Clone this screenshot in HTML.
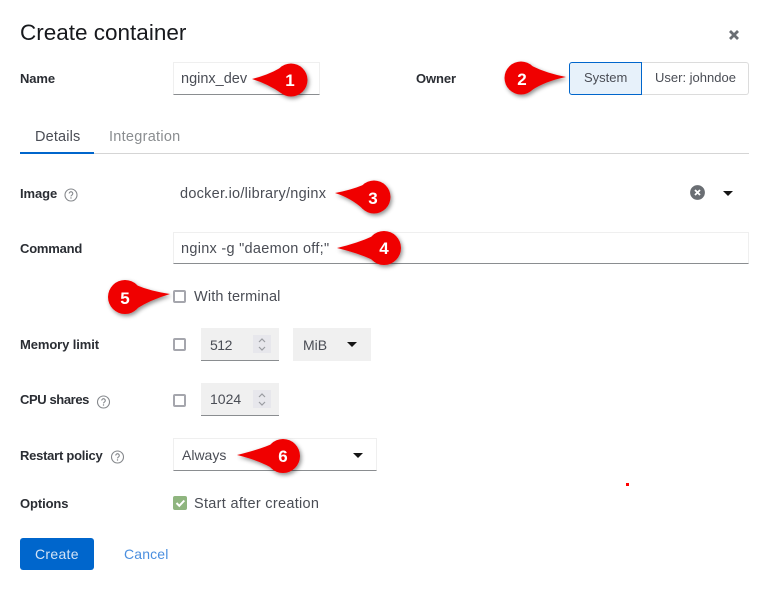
<!DOCTYPE html>
<html lang="en">
<head>
<meta charset="utf-8">
<title>Create container</title>
<style>
html,body{margin:0;padding:0;background:#fff}
body{width:768px;height:591px;position:relative;overflow:hidden;font-family:"Liberation Sans",sans-serif;color:#4a4d55}
#w{position:absolute;left:0;top:0;width:768px;height:591px;filter:blur(.35px)}
.t{position:absolute;white-space:nowrap;font-size:14px;line-height:18px;height:18px}
.l{position:absolute;white-space:nowrap;font-size:13px;line-height:18px;height:18px;font-weight:700;color:#2a2d33;letter-spacing:-.1px}
.b{position:absolute;box-sizing:border-box}
.inp{border:1px solid #efefef;border-bottom:1px solid #8a8d90;background:#fff}
.num{background:#f0f0f0;border-bottom:1px solid #8a8d90}
.cb{position:absolute;box-sizing:border-box;width:13px;height:13px;border:2px solid #a5a6ad;border-radius:2px;background:#fff}
.step{position:absolute;width:18px;height:18px;background:#e7e7ec}
svg{position:absolute;left:0;top:0}
</style>
</head>
<body>
<div id="w">
<div class="t" style="left:20px;top:19px;font-size:22.500px;line-height:28px;height:28px;color:#17191d">Create container</div>

<div class="l" style="left:20px;top:70px">Name</div>
<div class="b inp" style="left:173px;top:62px;width:147px;height:33px"></div>
<div class="t" style="left:181px;top:70px;font-size:14.500px">nginx_dev</div>

<div class="l" style="left:416px;top:70px">Owner</div>
<div class="b" style="left:569px;top:62px;width:73px;height:33px;background:#e7f1fa;border:1px solid #0066cc;border-radius:3px 0 0 3px"></div>
<div class="t" style="left:584px;top:69px;font-size:13px">System</div>
<div class="b" style="left:642px;top:62px;width:107px;height:33px;border:1px solid #dcdcdc;border-left:0;border-radius:0 3px 3px 0"></div>
<div class="t" style="left:655px;top:69px;font-size:13px">User: johndoe</div>

<div class="t" style="left:35px;top:128px;font-size:14.500px;letter-spacing:.15px">Details</div>
<div class="t" style="left:109px;top:128px;font-size:14.500px;letter-spacing:.27px;color:#8a8d90">Integration</div>
<div class="b" style="left:20px;top:153px;width:729px;height:1px;background:#d5d5d5"></div>
<div class="b" style="left:20px;top:152px;width:74px;height:2px;background:#0066cc"></div>

<div class="l" style="left:20px;top:185px">Image</div>
<div class="t" style="left:180px;top:185px;font-size:14.500px;letter-spacing:.26px">docker.io/library/nginx</div>

<div class="l" style="left:20px;top:240px;letter-spacing:-.2px">Command</div>
<div class="b inp" style="left:173px;top:232px;width:576px;height:32px"></div>
<div class="t" style="left:181px;top:240px;font-size:14.500px;letter-spacing:.28px">nginx -g "daemon off;"</div>

<div class="cb" style="left:173px;top:290px"></div>
<div class="t" style="left:194px;top:288px;font-size:14.500px;letter-spacing:.15px">With terminal</div>

<div class="l" style="left:20px;top:336px">Memory limit</div>
<div class="cb" style="left:173px;top:338px"></div>
<div class="b num" style="left:201px;top:328px;width:78px;height:33px"></div>
<div class="t" style="left:210px;top:336px;letter-spacing:-.5px">512</div>
<div class="step" style="left:253px;top:335px"></div>
<div class="b" style="left:293px;top:328px;width:78px;height:33px;background:#f0f0f0"></div>
<div class="t" style="left:303px;top:336px">MiB</div>

<div class="l" style="left:20px;top:391px;letter-spacing:-.4px">CPU shares</div>
<div class="cb" style="left:173px;top:394px"></div>
<div class="b num" style="left:201px;top:383px;width:78px;height:33px"></div>
<div class="t" style="left:210px;top:390px">1024</div>
<div class="step" style="left:253px;top:390px"></div>

<div class="l" style="left:20px;top:447px;letter-spacing:-.25px">Restart policy</div>
<div class="b inp" style="left:173px;top:438px;width:204px;height:33px"></div>
<div class="t" style="left:182px;top:446px">Always</div>

<div class="l" style="left:20px;top:495px">Options</div>
<div class="t" style="left:194px;top:495px;font-size:14.500px;letter-spacing:.3px">Start after creation</div>

<div class="b" style="left:20px;top:538px;width:74px;height:32px;background:#0066cc;border-radius:3px"></div>
<div class="t" style="left:35px;top:545px;color:#d3e3f5;letter-spacing:.3px">Create</div>
<div class="t" style="left:124px;top:545px;color:#4b8fdf;letter-spacing:.15px">Cancel</div>

<div class="b" style="left:626px;top:483px;width:3px;height:3px;background:#f00"></div>

<svg width="768" height="591" viewBox="0 0 768 591">
  <defs>
    <filter id="s" x="-30%" y="-30%" width="160%" height="160%">
      <feDropShadow dx="1.500" dy="2" stdDeviation="2" flood-color="#000" flood-opacity=".45"/>
    </filter>
  </defs>

  <!-- close -->
  <path d="M730 31l8 8M738 31l-8 8" stroke="#6a6e73" stroke-width="2.800" fill="none"/>

  <!-- help icons -->
  <g fill="none" stroke="#85888c" stroke-width="1.100">
    <circle cx="71" cy="195" r="6"/>
    <circle cx="103.500" cy="402" r="6"/>
    <circle cx="117.500" cy="457" r="6"/>
    <path d="M69.200 193.500a1.800 1.800 0 1 1 2.700 1.600c-.6.400-.9.700-.9 1.300"/>
    <path d="M101.700 400.500a1.800 1.800 0 1 1 2.700 1.600c-.6.400-.9.700-.9 1.300"/>
    <path d="M115.700 455.500a1.800 1.800 0 1 1 2.700 1.600c-.6.400-.9.700-.9 1.300"/>
  </g>
  <g fill="#85888c">
    <circle cx="71" cy="198" r=".7"/>
    <circle cx="103.500" cy="405" r=".7"/>
    <circle cx="117.500" cy="460" r=".7"/>
  </g>

  <!-- clear -->
  <circle cx="697.500" cy="192.500" r="7.400" fill="#6a6e73"/>
  <path d="M695 190l5 5M700 190l-5 5" stroke="#fff" stroke-width="1.800"/>

  <!-- carets -->
  <g fill="#151515">
    <path d="M723 191h10l-5 5z"/>
    <path d="M347 342h10l-5 5z"/>
    <path d="M353 453h10l-5 5z"/>
  </g>

  <!-- steppers -->
  <g fill="none" stroke="#9a9ca1" stroke-width="1.200">
    <path d="M259 342l3-3 3 3M259 347l3 3 3-3"/>
    <path d="M259 397l3-3 3 3M259 402l3 3 3-3"/>
  </g>

  <!-- green check -->
  <rect x="173" y="496" width="14" height="14" rx="2" fill="#8fb57f"/>
  <path d="M176.500 503l2.800 2.800 5-5.300" fill="none" stroke="#fff" stroke-width="2"/>

  <!-- callouts -->
  <g filter="url(#s)" fill="#f00000">
    <path d="M252 79Q268 75 280 68L281 93Q268 84 252 79Z"/>
    <circle cx="291" cy="80" r="16.500"/>
    <path d="M566 77Q546 73 532 66L532 90Q546 81 566 77Z"/>
    <circle cx="521" cy="78" r="16.500"/>
    <path d="M335 193Q351 190 363 185L363 209Q351 198 335 193Z"/>
    <circle cx="374" cy="197" r="16.500"/>
    <path d="M337 248Q358 243 373 236L373 260Q358 253 337 248Z"/>
    <circle cx="384" cy="248" r="17"/>
    <path d="M170 294Q150 291 136 285L136 309Q150 300 170 294Z"/>
    <circle cx="125" cy="297" r="17"/>
    <path d="M237 455Q258 450 272 444L272 468Q258 460 237 455Z"/>
    <circle cx="283" cy="456" r="17"/>
  </g>
  <g fill="#fff" font-family="'Liberation Sans',sans-serif" font-size="17" font-weight="700" text-anchor="middle">
    <text x="290" y="86">1</text>
    <text x="522" y="85">2</text>
    <text x="373" y="204">3</text>
    <text x="384" y="254">4</text>
    <text x="125" y="304">5</text>
    <text x="283" y="462">6</text>
  </g>
</svg>
</div>
</body>
</html>
